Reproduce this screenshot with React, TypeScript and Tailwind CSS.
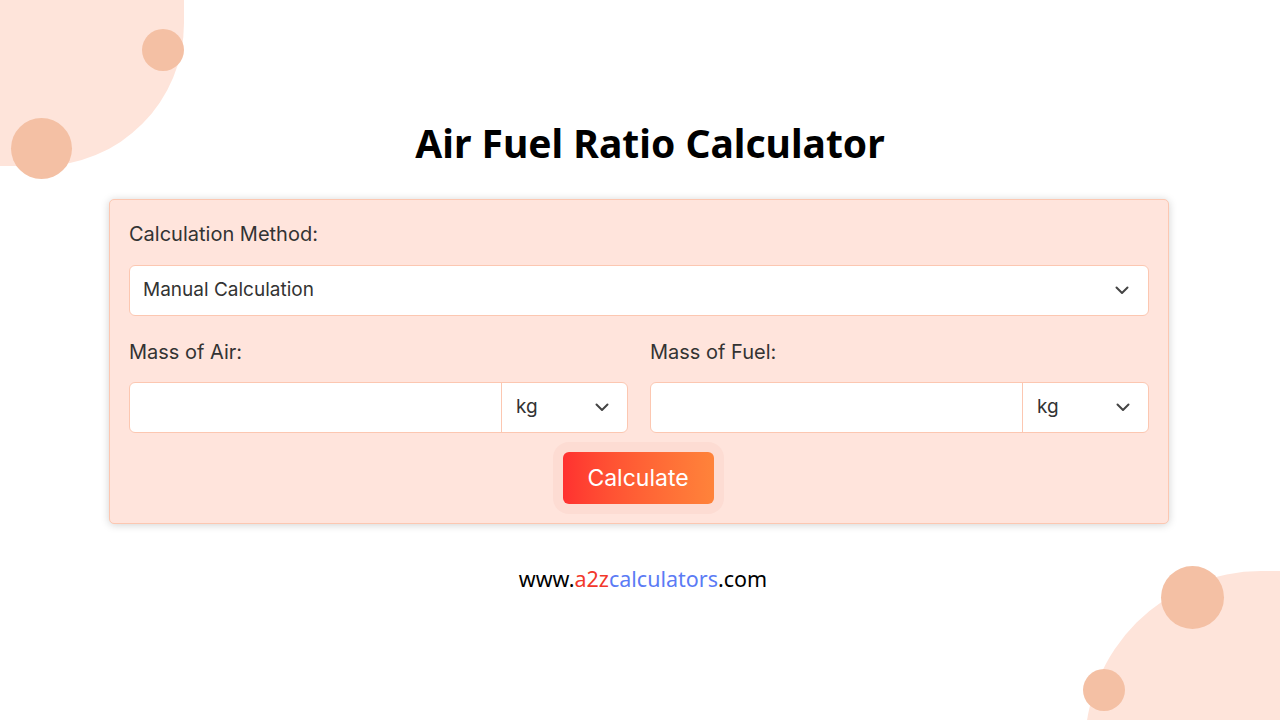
import React from "react";

function Chevron() {
  return (
    <svg width="14" height="9" viewBox="0 0 14 9" fill="none">
      <path d="M1.5 1.5L7 7L12.5 1.5" stroke="#444" strokeWidth="2" strokeLinecap="round" strokeLinejoin="round" />
    </svg>
  );
}

function UnitInput() {
  return (
    <div className="flex h-[51px] flex-1 rounded-[6px] border-[1.5px] border-[#fcc7b1] bg-white">
      <div className="flex-1" />
      <div className="flex w-[126px] items-center justify-between border-l-[1.5px] border-[#fcc7b1] pl-[14px] pr-[18px] text-[19px] text-[#333]">
        <span>kg</span>
        <Chevron />
      </div>
    </div>
  );
}

export default function App() {
  return (
    <div className="relative h-[720px] w-[1280px] overflow-hidden bg-white" style={{ fontFamily: "Inter, 'Noto Sans', sans-serif" }}>
      {/* decorations */}
      <div className="absolute left-[-100px] top-[-100px] h-[266px] w-[284px] rounded-br-[143px] bg-[#fee4da]" />
      <div className="absolute left-[142px] top-[29px] h-[42px] w-[42px] rounded-full bg-[#f4c0a4]" />
      <div className="absolute left-[11px] top-[118px] h-[61px] w-[61px] rounded-full bg-[#f4c0a4]" />
      <div className="absolute left-[1085px] top-[571px] h-[300px] w-[300px] rounded-tl-[176px] bg-[#fee4da]" />
      <div className="absolute left-[1161px] top-[566px] h-[63px] w-[63px] rounded-full bg-[#f4c0a4]" />
      <div className="absolute left-[1083px] top-[669px] h-[42px] w-[42px] rounded-full bg-[#f4c0a4]" />

      <div className="relative flex flex-col items-center pt-[118px]">
        <h1 className="pl-[20px] text-[39px] font-bold leading-[50px] text-black" style={{ fontFamily: "'Noto Sans', sans-serif" }}>
          Air Fuel Ratio Calculator
        </h1>

        <div className="ml-[-2px] mt-[31px] w-[1060px] rounded-[5px] border border-[#fcc7b1] bg-[#ffe4dc] px-[19px] pb-[9px] pt-[20px] shadow-[0_1px_8px_rgba(0,0,0,0.18)]">
          <div className="text-[20px] leading-[28px] text-[#333]">Calculation Method:</div>
          <div className="mt-[17px] flex h-[51px] items-center justify-between rounded-[6px] border-[1.5px] border-[#fcc7b1] bg-white pl-[13px] pr-[19px] text-[19px] text-[#333]">
            <span>Manual Calculation</span>
            <Chevron />
          </div>

          <div className="mt-[22px] flex gap-[22px]">
            <div className="flex flex-1 flex-col">
              <div className="text-[20px] leading-[28px] text-[#333]">Mass of Air:</div>
              <div className="mt-[16px] flex">
                <UnitInput />
              </div>
            </div>
            <div className="flex flex-1 flex-col">
              <div className="text-[20px] leading-[28px] text-[#333]">Mass of Fuel:</div>
              <div className="mt-[16px] flex">
                <UnitInput />
              </div>
            </div>
          </div>

          <div className="mt-[9px] flex justify-center">
            <div className="ml-[-2px] rounded-[16px] bg-[#fddcd3] p-[10px]">
              <button className="flex h-[52px] w-[151px] items-center justify-center rounded-[6px] bg-gradient-to-r from-[#ff3030] to-[#ff833a] text-[23px] text-white">
                Calculate
              </button>
            </div>
          </div>
        </div>

        <div className="mt-[41px] pl-[6px] text-[21.5px] leading-[28px] text-black" style={{ fontFamily: "'Noto Sans', sans-serif" }}>
          www.<span className="text-[#f2382b]">a2z</span>
          <span className="text-[#5b7bf5]">calculators</span>.com
        </div>
      </div>
    </div>
  );
}
